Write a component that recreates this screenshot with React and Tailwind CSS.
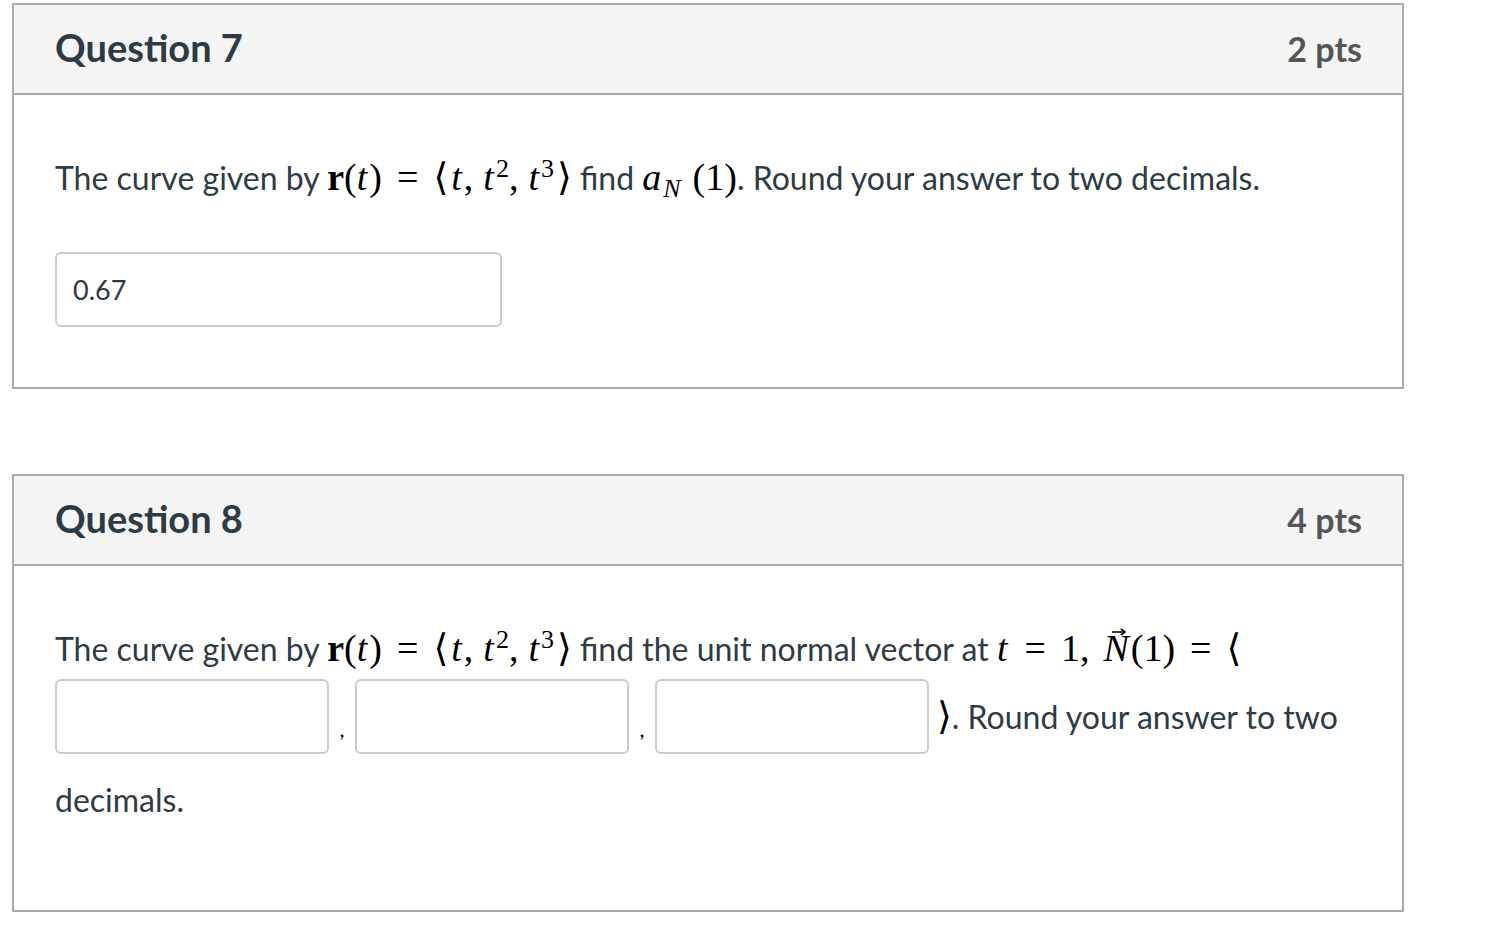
import React from "react";

const lato = { fontFamily: "Lato, 'Open Sans', sans-serif" };

// small helpers for the math bits
const M = ({ children, className = "" }) => (
  <span
    className={`text-[38px] text-black ${className}`}
    style={{ fontFamily: "'Liberation Serif', 'DejaVu Serif', serif" }}
  >
    {children}
  </span>
);
const I = ({ children }) => <i className="pr-[2px]">{children}</i>;
const Eq = () => <span className="mx-[15px]">=</span>;

const RofT = () => (
  <M>
    <b>r</b>(<I>t</I>)<Eq />⟨<span className="ml-[3px]" />
    <I>t</I>,<span className="ml-[10px]" />
    <I>t</I>
    <sup className="text-[26px]">2</sup>,<span className="ml-[10px]" />
    <I>t</I>
    <sup className="text-[26px]">3</sup>
    <span className="ml-[3px]" />⟩
  </M>
);

const Card = ({ title, pts, children, bodyClass = "" }) => (
  <div className="w-[1392px] border-2 border-[#aaaaaa] bg-white">
    <div className="h-[90px] bg-[#f5f5f5] border-b-2 border-[#aaaaaa] flex items-center justify-between pl-[41px] pr-[40px]">
      <h2 className="text-[38px] font-bold text-[#2d3b45] leading-none -mt-[4px]">{title}</h2>
      <span className="text-[34px] font-bold text-[#565656] leading-none">{pts}</span>
    </div>
    <div className={`px-[41px] text-[32px] text-[#2d3b45] ${bodyClass}`}>{children}</div>
  </div>
);

const Box = ({ className = "", value }) => (
  <input
    readOnly
    value={value || ""}
    className={`h-[75px] border-2 border-[#cccccc] rounded-[6px] bg-white px-[16px] text-[27px] text-[#2d3b45] outline-none ${className}`}
    style={lato}
  />
);

const Comma = () => (
  <span className="inline-block w-[26px] text-center text-[22px] align-middle relative top-[12px] text-black">,</span>
);

export default function App() {
  return (
    <div className="bg-white min-h-[950px] pl-[12px] pt-[3px]" style={lato}>
      <Card title="Question 7" pts="2 pts" bodyClass="pt-[60px] pb-[60px]">
        <p className="leading-[45px]">
          The curve given by <RofT /> find{" "}
          <M>
            <I>a</I>
            <sub className="text-[26px] italic">N</sub>
            <span className="ml-[12px]" />
            (1)
          </M>
          . Round your answer to two decimals.
        </p>
        <div className="mt-[52px]">
          <Box className="w-[447px]" value="0.67" />
        </div>
      </Card>

      <div className="h-[85px]" />

      <Card title="Question 8" pts="4 pts" bodyClass="pt-[60px] pb-[88px]">
        <p className="leading-[45px]">
          The curve given by <RofT /> find the unit normal vector at{" "}
          <M>
            <I>t</I>
            <Eq />
            1,<span className="ml-[14px]" />
            <span className="relative inline-block">
              <I>N</I>
              <svg
                className="absolute left-[8px] top-[2px]"
                width="16"
                height="8"
                viewBox="0 0 16 8"
              >
                <path d="M1 4 H14 M10 1 L14 4 L10 7" stroke="black" strokeWidth="1.6" fill="none" />
              </svg>
            </span>
            (1)
            <Eq />⟨
          </M>
          <br />
          <span className="inline-block mt-[8px] mb-[23px]">
            <Box className="w-[274px] align-middle" />
            <Comma />
            <Box className="w-[274px] align-middle" />
            <Comma />
            <Box className="w-[274px] align-middle" />
            <M className="ml-[8px] align-middle">⟩</M>
            <span className="align-middle">. Round your answer to two</span>
          </span>
          <br />
          decimals.
        </p>
      </Card>
    </div>
  );
}
